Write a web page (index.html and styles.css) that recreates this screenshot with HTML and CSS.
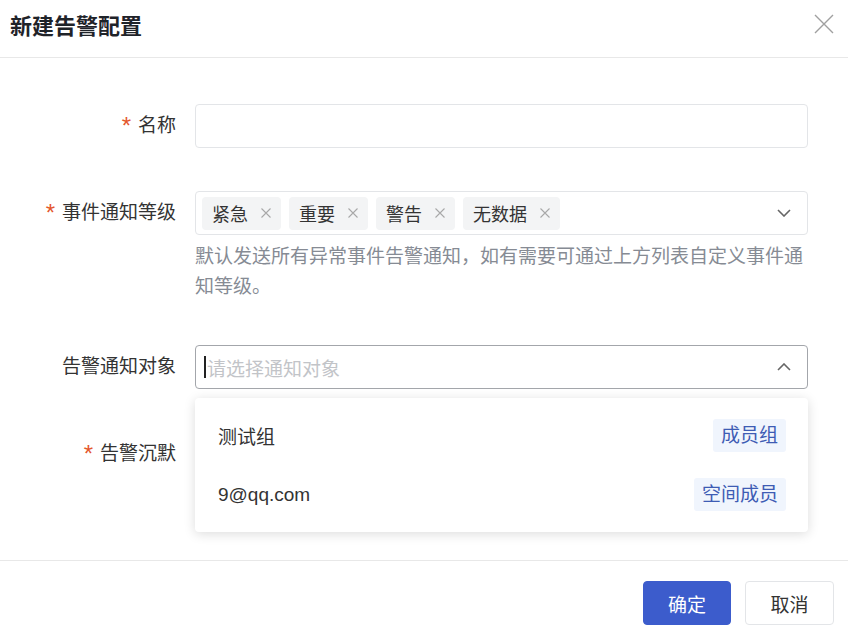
FILE: index.html
```html
<!DOCTYPE html>
<html lang="zh-CN">
<head>
    <meta charset="UTF-8">
    <meta name="viewport" content="width=device-width, initial-scale=1.0">
    <title>新建告警配置</title>
    <link rel="stylesheet" href="styles.css">
</head>
<body>
    <div class="dialog">
        <div class="dialog-header">
            <h2 class="dialog-title">新建告警配置</h2>
            <button class="close-btn" aria-label="关闭">
                <svg width="20" height="20" viewBox="0 0 20 20"><path d="M1 1L19 19M19 1L1 19" stroke="#a0a0a0" stroke-width="1.4" fill="none"/></svg>
            </button>
        </div>

        <div class="dialog-body">
            <div class="form-row">
                <label class="form-label"><span class="required">*</span>名称</label>
                <div class="form-control">
                    <div class="field"></div>
                </div>
            </div>

            <div class="form-row">
                <label class="form-label"><span class="required">*</span>事件通知等级</label>
                <div class="form-control">
                    <div class="field select">
                        <span class="tag">紧急<svg class="tag-close" width="10" height="10" viewBox="0 0 10 10"><path d="M0.5 0.5L9.5 9.5M9.5 0.5L0.5 9.5" stroke="#a8a8a8" stroke-width="1.1" fill="none"/></svg></span>
                        <span class="tag">重要<svg class="tag-close" width="10" height="10" viewBox="0 0 10 10"><path d="M0.5 0.5L9.5 9.5M9.5 0.5L0.5 9.5" stroke="#a8a8a8" stroke-width="1.1" fill="none"/></svg></span>
                        <span class="tag">警告<svg class="tag-close" width="10" height="10" viewBox="0 0 10 10"><path d="M0.5 0.5L9.5 9.5M9.5 0.5L0.5 9.5" stroke="#a8a8a8" stroke-width="1.1" fill="none"/></svg></span>
                        <span class="tag">无数据<svg class="tag-close" width="10" height="10" viewBox="0 0 10 10"><path d="M0.5 0.5L9.5 9.5M9.5 0.5L0.5 9.5" stroke="#a8a8a8" stroke-width="1.1" fill="none"/></svg></span>
                        <svg class="arrow" width="14" height="8" viewBox="0 0 14 8"><path d="M1 1L7 7L13 1" stroke="#666" stroke-width="1.6" fill="none"/></svg>
                    </div>
                    <p class="help">默认发送所有异常事件告警通知，如有需要可通过上方列表自定义事件通知等级。</p>
                </div>
            </div>

            <div class="form-row">
                <label class="form-label">告警通知对象</label>
                <div class="form-control">
                    <div class="field select focused">
                        <span class="caret"></span>
                        <span class="placeholder">请选择通知对象</span>
                        <svg class="arrow" width="14" height="8" viewBox="0 0 14 8"><path d="M1 7L7 1L13 7" stroke="#666" stroke-width="1.6" fill="none"/></svg>
                    </div>
                    <ul class="dropdown">
                        <li class="option">测试组<span class="type-tag">成员组</span></li>
                        <li class="option">9@qq.com<span class="type-tag">空间成员</span></li>
                    </ul>
                </div>
            </div>

            <div class="form-row">
                <label class="form-label"><span class="required">*</span>告警沉默</label>
                <div class="form-control">
                    <div class="field"></div>
                </div>
            </div>
        </div>

        <div class="dialog-footer">
            <button class="btn btn-primary">确定</button>
            <button class="btn">取消</button>
        </div>
    </div>
</body>
</html>
```

FILE: styles.css
```css
* {
    margin: 0;
    padding: 0;
    box-sizing: border-box;
}

body {
    font-family: "Liberation Sans", "Noto Sans CJK SC", sans-serif;
    font-size: 19px;
    color: #333333;
    background: #ffffff;
}

.dialog {
    width: 848px;
    height: 636px;
    display: flex;
    flex-direction: column;
    overflow: hidden;
}

.dialog-header {
    height: 58px;
    display: flex;
    align-items: center;
    justify-content: space-between;
    padding: 0 14px 10px 10px;
    border-bottom: 1px solid #e8e8e8;
}

.dialog-title {
    font-size: 22px;
    font-weight: bold;
    color: #1f2329;
}

.close-btn {
    background: none;
    border: none;
    width: 20px;
    height: 20px;
    cursor: pointer;
}

.close-btn svg {
    display: block;
}

.dialog-body {
    flex: 1;
    padding: 46px 40px 0 0;
    overflow: hidden;
}

.form-row {
    display: grid;
    grid-template-columns: 195px 1fr;
    margin-bottom: 43px;
}

.form-label {
    text-align: right;
    padding-right: 19px;
    line-height: 44px;
    color: #333333;
}

.required {
    color: #e4572e;
    font-size: 24px;
    margin-right: 7px;
    vertical-align: -2px;
}

.form-control {
    position: relative;
}

.field {
    height: 44px;
    border: 1px solid #e3e5e8;
    border-radius: 4px;
    background: #ffffff;
}

.select {
    display: flex;
    align-items: center;
    padding: 0 16px 0 6px;
    gap: 8px;
}

.select.focused {
    border-color: #a3a6ab;
    padding-left: 8px;
    gap: 0;
}

.tag {
    display: inline-flex;
    align-items: center;
    height: 33px;
    padding: 0 10px;
    background: #f3f4f5;
    border-radius: 4px;
    font-size: 18px;
    color: #333333;
}

.tag-close {
    margin-left: 13px;
}

.arrow {
    margin-left: auto;
}

.caret {
    width: 2px;
    height: 22px;
    background: #222222;
    margin-right: 1px;
}

.placeholder {
    color: #c2c4c8;
}

.help {
    margin-top: 7px;
    font-size: 19px;
    line-height: 30px;
    color: #868b94;
}

.dropdown {
    position: absolute;
    top: 53px;
    left: 0;
    right: 0;
    list-style: none;
    background: #ffffff;
    border-radius: 4px;
    padding: 8px 0;
    box-shadow: 0 2px 12px rgba(0, 0, 0, 0.14);
    z-index: 10;
}

.option {
    height: 59px;
    display: flex;
    align-items: center;
    justify-content: space-between;
    padding: 0 22px 0 23px;
    color: #333333;
}

.type-tag {
    height: 33px;
    line-height: 33px;
    padding: 0 8px;
    background: #f0f5fd;
    border-radius: 3px;
    color: #3e5cb4;
}

.dialog-footer {
    height: 76px;
    display: flex;
    justify-content: flex-end;
    align-items: flex-start;
    gap: 14px;
    padding: 20px 14px 0 0;
    border-top: 1px solid #e8e8e8;
}

.btn {
    width: 89px;
    height: 44px;
    border: 1px solid #e3e5e8;
    border-radius: 4px;
    background: #ffffff;
    color: #333333;
    font-family: inherit;
    font-size: 19px;
    cursor: pointer;
}

.btn-primary {
    width: 88px;
    background: #3c5ccc;
    border-color: #3c5ccc;
    color: #ffffff;
}
```
